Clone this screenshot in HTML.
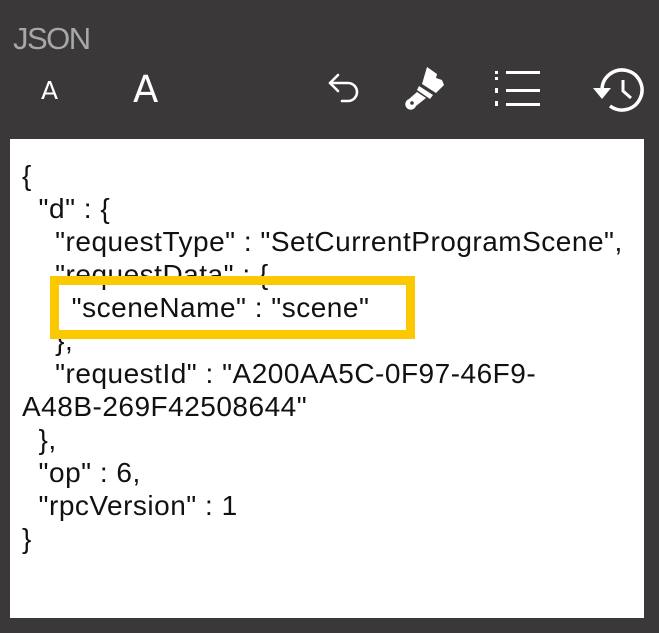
<!DOCTYPE html>
<html><head><meta charset="utf-8"><style>
body{margin:0;width:659px;height:633px;background:#3a3839;position:relative;overflow:hidden;font-family:"Liberation Sans",sans-serif}
.t{position:absolute;left:13px;top:21px;color:#a9a8a8;font-size:31px;letter-spacing:-1.5px}
.a{position:absolute;color:#fff;font-family:"DejaVu Sans","Liberation Sans",sans-serif;font-weight:normal}
.panel{position:absolute;left:10px;top:139px;width:634px;height:479px;background:#fff}
.code{position:absolute;left:22px;top:159px;margin:0;font-size:28px;line-height:33px;color:#111;white-space:pre;font-family:"Liberation Sans",sans-serif;letter-spacing:0.5px}
.box{position:absolute;left:50px;top:276px;width:347px;height:45px;border:9px solid #fcc800}
</style></head><body>
<div class="t">JSON</div>
<div class="a" style="left:41px;top:76px;font-size:25px">A</div>
<div class="a" style="left:133px;top:68px;font-size:37px">A</div>
<svg style="position:absolute;left:326px;top:72px" width="36" height="36" viewBox="0 0 36 36" fill="none" stroke="#fff" stroke-width="2.6" stroke-linecap="round" stroke-linejoin="round">
<path d="M12 3 L4 11 L12 19"/><path d="M4 11 H22 a9 9 0 0 1 0 18 H16"/></svg>
<svg style="position:absolute;left:400px;top:62px" width="50" height="52" viewBox="0 0 50 52" fill="#fff">
<path d="M27 5 L37 12 L36 16 L42 18 L44 23 L36 31 L22 22 Z"/>
<path d="M19 24 L33 33 L30 37 L17 28 Z"/>
<path d="M17 30 L26 36 L16 44 a5.5 5.5 0 1 1 -7 -7 Z"/>
<circle cx="12" cy="41" r="1.8" fill="#3a3839"/></svg>
<svg style="position:absolute;left:494px;top:70px" width="48" height="40" viewBox="0 0 48 40" fill="#fff">
<rect x="1" y="1" width="3" height="3"/><rect x="1" y="7" width="3" height="3"/><rect x="1" y="18" width="3" height="5"/><rect x="1" y="31" width="3" height="5"/>
<rect x="12" y="1" width="34" height="3"/><rect x="12" y="19" width="34" height="3"/><rect x="12" y="33" width="34" height="3"/></svg>
<svg style="position:absolute;left:590px;top:66px" width="54" height="48" viewBox="0 0 54 48" fill="none" stroke="#fff" stroke-width="3.5">
<path d="M12 24 A20 20 0 1 1 20 40"/><path d="M33 14 V25 L41 32" stroke-width="3"/>
<path d="M3 22 L21 22 L12 33 Z" fill="#fff" stroke="none"/></svg>
<div class="panel"></div>
<pre class="code">{
  "d" : {
    "requestType" : "SetCurrentProgramScene",
    "requestData" : {
      "sceneName" : "scene"
    },
    "requestId" : "A200AA5C-0F97-46F9-
A48B-269F42508644"
  },
  "op" : 6,
  "rpcVersion" : 1
}</pre>
<div class="box"></div>
</body></html>
